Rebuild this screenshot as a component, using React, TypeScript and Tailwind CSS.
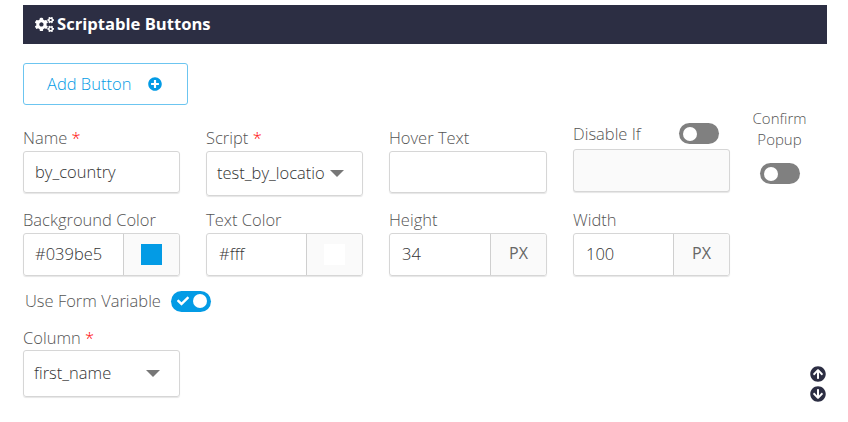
import { FaArrowCircleDown, FaArrowCircleUp, FaCheck, FaCogs, FaPlusCircle } from 'react-icons/fa'

const labelCls = 'block text-[16.5px] leading-[22px] font-light text-[#555]'
const boxCls = 'border border-[#d6d6d6] rounded-[3px] shadow-[0_1px_1px_rgba(0,0,0,0.1)]'
const valueCls = 'text-[16.5px] font-light text-[#333]'

function Star() {
  return <span className="text-[#f00]"> *</span>
}

function Caret() {
  return (
    <svg width="14" height="7" viewBox="0 0 14 7" className="shrink-0">
      <path d="M0 0h14L7 7z" fill="#777" />
    </svg>
  )
}

function Toggle({ on }: { on?: boolean }) {
  return (
    <div className={`flex h-[21px] w-[40px] items-center rounded-full px-[4px] ${on ? 'justify-between bg-[#039be5]' : 'bg-[#808080]'}`}>
      {on && <FaCheck className="ml-[2px] size-[12px] text-white" />}
      <div className="size-[14px] rounded-full bg-white" />
    </div>
  )
}

function AddonInput({ value, children, className }: { value: string; children: React.ReactNode; className: string }) {
  return (
    <div className={`mt-[2px] flex h-[43px] ${boxCls} ${className}`}>
      <div className={`flex items-center ${valueCls}`}>{value}</div>
      <div className="ml-auto flex w-[56px] items-center justify-center rounded-r-[3px] border-l border-[#cfcfcf] bg-[#fafafa]">{children}</div>
    </div>
  )
}

function PxAddon() {
  return <span className="-mt-[3px] text-[16px] text-[#666]">PX</span>
}

export default function App() {
  return (
    <div className="h-[422px] w-[848px] overflow-hidden bg-white px-[23px] pt-[5px] font-['Open_Sans',sans-serif]">
      <div className="flex h-[39px] w-[804px] items-center gap-[3px] bg-[#2c2e43] pl-[12px] text-[16.6px] font-bold text-white">
        <FaCogs className="size-[19px]" />
        <span>Scriptable Buttons</span>
      </div>

      <button className="mt-[19px] flex h-[42px] w-[165px] items-center gap-[17px] rounded-[3px] border border-[#6cc5f0] pl-[23px] text-[16.5px] font-light text-[#039be5]">
        Add Button
        <FaPlusCircle className="size-[14px]" />
      </button>

      <div className="mt-[18px] flex items-start">
        <div className="mr-[26px] w-[157px] pt-[4px]">
          <label className={labelCls}>Name<Star /></label>
          <div className={`mt-[2px] flex h-[42px] items-center px-[11px] ${valueCls} ${boxCls}`}>by_country</div>
        </div>
        <div className="mr-[26px] w-[157px] pt-[4px]">
          <label className={labelCls}>Script<Star /></label>
          <div className={`mt-[2px] flex h-[45px] items-center justify-between pr-[18px] pl-[10px] ${valueCls} ${boxCls}`}>
            test_by_locatio
            <Caret />
          </div>
        </div>
        <div className="mr-[26px] w-[158px] pt-[4px]">
          <label className={labelCls}>Hover Text</label>
          <div className={`mt-[2px] h-[42px] ${boxCls}`} />
        </div>
        <div className="mr-[23px] w-[157px]">
          <div className="flex h-[21px] items-center justify-between pr-[11px]">
            <label className={labelCls}>Disable If</label>
            <Toggle />
          </div>
          <div className={`mt-[5px] h-[43px] bg-[#fafafa] ${boxCls}`} />
        </div>
        <div className="-mt-[15px] flex w-[53px] flex-col items-center">
          <div className="text-center text-[15px] leading-[21px] font-light text-[#555]">Confirm Popup</div>
          <div className="mt-[13px]"><Toggle /></div>
        </div>
      </div>

      <div className="mt-[13px] flex">
        <div className="mr-[26px]">
          <label className={labelCls}>Background Color</label>
          <AddonInput value="#039be5" className="w-[157px] pl-[11px]"><div className="size-[21px] bg-[#039be5]" /></AddonInput>
        </div>
        <div className="mr-[26px]">
          <label className={labelCls}>Text Color</label>
          <AddonInput value="#fff" className="w-[157px] pl-[12px]"><div className="size-[21px] bg-white" /></AddonInput>
        </div>
        <div className="mr-[26px]">
          <label className={labelCls}>Height</label>
          <AddonInput value="34" className="w-[158px] pl-[12px]"><PxAddon /></AddonInput>
        </div>
        <div>
          <label className={labelCls}>Width</label>
          <AddonInput value="100" className="w-[157px] pl-[12px]"><PxAddon /></AddonInput>
        </div>
      </div>

      <div className="mt-[13px] ml-[2px] flex items-center gap-[10px]">
        <span className="text-[16.5px] font-light text-[#555]">Use Form Variable</span>
        <Toggle on />
      </div>

      <div className="flex w-[803px] items-end justify-between">
        <div className="mt-[13px] w-[157px]">
          <label className={labelCls}>Column<Star /></label>
          <div className={`mt-[1px] flex h-[47px] items-center justify-between pr-[19px] pl-[10px] ${valueCls} ${boxCls}`}>
            first_name
            <Caret />
          </div>
        </div>
        <div className="-mb-[5px] flex flex-col items-center gap-[4px] text-[#2c2e43]">
          <FaArrowCircleUp className="size-[16px]" />
          <FaArrowCircleDown className="size-[16px]" />
        </div>
      </div>
    </div>
  )
}
